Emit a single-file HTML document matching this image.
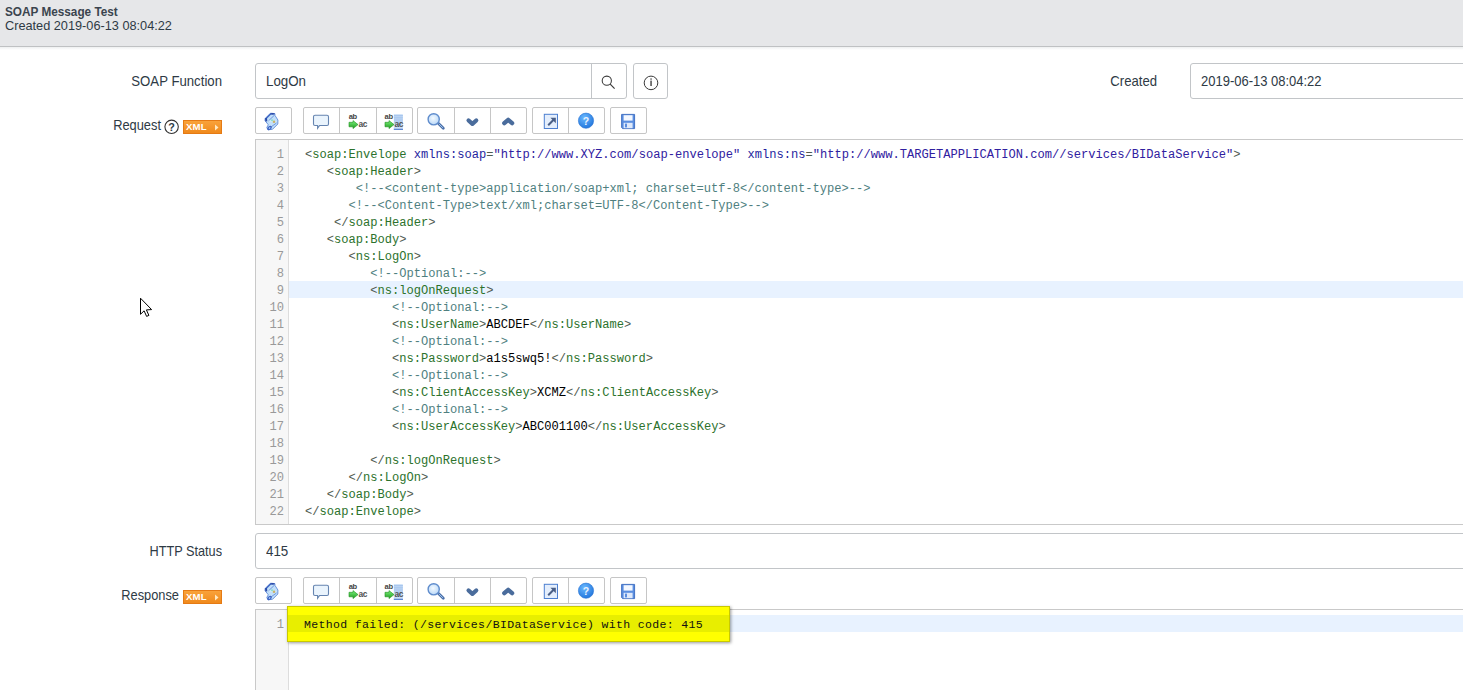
<!DOCTYPE html>
<html><head><meta charset="utf-8"><style>
*{box-sizing:border-box}
html,body{margin:0;padding:0}
body{width:1463px;height:690px;overflow:hidden;position:relative;background:#fff;font-family:"Liberation Sans",sans-serif;color:#2e3a45}
.abs{position:absolute}
.lbl{font-size:14.2px;line-height:16px;white-space:nowrap;text-align:right;transform:scaleX(0.94);transform-origin:100% 0}
.inp{border:1px solid #c2c5c8;border-radius:3px;background:#fff}
.itxt{font-size:14.2px;line-height:16px;white-space:nowrap;transform:scaleX(0.94);transform-origin:0 0}
.grp{border:1px solid #c6c6c6;border-radius:2px;background:#fff}
.sep{width:1px;background:#c6c6c6}
.ed{border:1px solid #c9c9c9;border-right:none;background:#fff;overflow:hidden}
.gut{background:#f7f7f7;border-right:1px solid #dddddd}
.code{font-family:"Liberation Mono",monospace;font-size:12.5px;line-height:17px;white-space:pre;transform:scaleX(0.9667);transform-origin:0 0}
.ln{text-align:right;color:#999;font-family:"Liberation Mono",monospace;font-size:12.5px;transform:scaleX(0.9667);transform-origin:100% 0;line-height:17px;white-space:pre}
.tg{color:#2c722c}.br{color:#4f5a4f}.at{color:#1f1fa0}.st{color:#3020a0}.cm{color:#4f7f7f}.tx{color:#000}
.xml{width:39px;height:14px;background:linear-gradient(#f9a23a,#f08a1c);border:1px solid #e57a14}
.xml span{position:absolute;left:2px;top:0px;font-size:9.6px;font-weight:bold;color:#fff;line-height:12px;letter-spacing:0.2px}
</style></head><body>
<div class="abs" style="left:0;top:0;width:1463px;height:47px;background:#e6e7e9;border-bottom:1px solid #bfc1c3"></div>
<div class="abs" style="left:0;top:47px;width:1463px;height:3px;background:linear-gradient(#eef0f1,#fff)"></div>
<div class="abs" style="left:5px;top:4px;font-size:12.8px;font-weight:bold;line-height:15px;white-space:nowrap;transform:scaleX(0.92);transform-origin:0 0;color:#3a444e">SOAP Message Test</div>
<div class="abs" style="left:5px;top:18px;font-size:13.4px;line-height:16px;white-space:nowrap;transform:scaleX(0.95);transform-origin:0 0">Created 2019-06-13 08:04:22</div>
<div class="abs lbl" style="left:22px;width:200px;top:73px;transform:scaleX(0.93)">SOAP Function</div>
<div class="abs inp" style="left:255px;top:63px;width:372px;height:36px"></div>
<div class="abs" style="left:591px;top:64px;width:1px;height:34px;background:#c2c5c8"></div>
<div class="abs itxt" style="left:266px;top:73px">LogOn</div>
<div class="abs inp" style="left:633px;top:63px;width:35px;height:36px"></div>
<svg class="abs" style="left:596px;top:70px" width="24" height="24" viewBox="0 0 24 24"><circle cx="10.8" cy="10.7" r="4.6" fill="none" stroke="#3a3a3a" stroke-width="1.05"/><line x1="14.2" y1="14.2" x2="18.6" y2="18.6" stroke="#3a3a3a" stroke-width="1.2"/></svg>
<svg class="abs" style="left:639px;top:71px" width="24" height="24" viewBox="0 0 24 24"><circle cx="12" cy="11.9" r="6.8" fill="none" stroke="#3a3a3a" stroke-width="1"/><rect x="11.4" y="9.6" width="1.3" height="5.4" fill="#333"/><rect x="11.4" y="7.4" width="1.3" height="1.3" fill="#333"/></svg>
<div class="abs lbl" style="left:957px;width:200px;top:73px;transform:scaleX(0.925)">Created</div>
<div class="abs inp" style="left:1190px;top:63px;width:300px;height:36px"></div>
<div class="abs itxt" style="left:1201px;top:73px;transform:scaleX(0.915)">2019-06-13 08:04:22</div>
<div class="abs lbl" style="left:-39px;width:200px;top:117px;transform:scaleX(0.905)">Request</div>
<svg class="abs" style="left:160px;top:115px" width="24" height="24" viewBox="0 0 24 24"><circle cx="11.6" cy="11.8" r="6.7" fill="none" stroke="#333" stroke-width="1.1"/><text x="11.6" y="15.7" text-anchor="middle" font-family="Liberation Sans" font-weight="bold" font-size="10.8" fill="#2e3a45">?</text></svg>
<div class="abs xml" style="left:183px;top:120px"><span>XML</span><svg class="abs" style="left:30px;top:3px" width="6" height="8"><path d="M1,0.5 L4.5,3.5 L1,6.5Z" fill="#ffe8c0"/></svg></div>
<div class="abs grp" style="left:255px;top:107px;width:37px;height:27px"></div>
<div class="abs grp" style="left:303px;top:107px;width:110px;height:27px"></div>
<div class="abs sep" style="left:339px;top:108px;height:25px"></div>
<div class="abs sep" style="left:376px;top:108px;height:25px"></div>
<div class="abs grp" style="left:417px;top:107px;width:110px;height:27px"></div>
<div class="abs sep" style="left:454px;top:108px;height:25px"></div>
<div class="abs sep" style="left:490px;top:108px;height:25px"></div>
<div class="abs grp" style="left:532px;top:107px;width:73px;height:27px"></div>
<div class="abs sep" style="left:568px;top:108px;height:25px"></div>
<div class="abs grp" style="left:610px;top:107px;width:37px;height:27px"></div>
<svg class="abs" style="left:250px;top:105px" width="400" height="32" viewBox="250 105 400 32">
<defs>
<linearGradient id="gr107" x1="0" y1="0" x2="0" y2="1"><stop offset="0" stop-color="#7cf27c"/><stop offset="1" stop-color="#1f9a1f"/></linearGradient>
<radialGradient id="hb107" cx="0.4" cy="0.3" r="0.8"><stop offset="0" stop-color="#6ab8ff"/><stop offset="1" stop-color="#1a6fd8"/></radialGradient>
<radialGradient id="mg107" cx="0.45" cy="0.4" r="0.6"><stop offset="0" stop-color="#f4faff"/><stop offset="1" stop-color="#b9d8f8"/></radialGradient>
</defs>
<!-- format scroll -->
<g>
<path d="M270.5,113.2 L274.8,113.6 L275,115.5 L277.9,120 L277.8,124 L272.5,129.3 L268,129.8 L266.8,127.5 L268.3,124.8 L265,120.5 L265.2,118.5 Z" fill="#c2e0fa" stroke="#6a94dc" stroke-width="1"/>
<path d="M270.8,113.8 L265.6,119" stroke="#3f66c4" stroke-width="1.4"/>
<path d="M274.6,115 L268.4,121" stroke="#6f95dc" stroke-width="1"/>
<path d="M266,118.2 L266.3,121.4" stroke="#2a4aa8" stroke-width="2"/>
<ellipse cx="272.5" cy="113.8" rx="2.3" ry="0.9" fill="#2a4aa8"/>
<path d="M268.4,121 L276.5,121.5" stroke="#e8f4ff" stroke-width="1.2" opacity="0.6"/>
<circle cx="274" cy="121.8" r="1.3" fill="#c8b068"/>
<circle cx="272" cy="120.2" r="1" fill="#86e2c4"/>
<path d="M276.5,123 L271,127" stroke="#6f95dc" stroke-width="1"/>
<ellipse cx="269.5" cy="128" rx="2.6" ry="1.7" transform="rotate(-35 269.5 128)" fill="#3a62c4"/>
<ellipse cx="269.6" cy="128" rx="1" ry="0.7" transform="rotate(-35 269.6 128)" fill="#cde6ff"/>
</g>
<!-- comment bubble -->
<path d="M315,115.3 H327 Q328.5,115.3 328.5,116.8 V124 Q328.5,125.5 327,125.5 H319.6 L317.6,128.3 L317.6,125.5 H315 Q313.5,125.5 313.5,124 V116.8 Q313.5,115.3 315,115.3 Z" fill="#eaf4fd" stroke="#6584b0" stroke-width="1.1"/>
<!-- replace -->
<g font-family="Liberation Sans" font-weight="bold">
<text x="348.7" y="119.3" font-size="7.6" fill="#444" letter-spacing="-0.3">ab</text>
<text x="358.4" y="127.4" font-size="8.4" fill="#505050" letter-spacing="-0.4">ac</text>
<path d="M349,122.3 H353 V120.6 L358,124.6 L353,128.6 V126.8 H349 Z" fill="url(#gr107)" stroke="#1f8f1f" stroke-width="0.6"/>
<text x="384.6" y="119.3" font-size="7.6" fill="#444" letter-spacing="-0.3">ab</text>
<rect x="393.8" y="114.2" width="9" height="15.4" fill="#c8def8"/>
<path d="M394,115.8 H403 M394,117.9 H403 M394,120 H403 M394,122.1 H403" stroke="#8fb4e6" stroke-width="0.8"/>
<path d="M393.8,129.3 H403" stroke="#3f6fc8" stroke-width="1"/>
<text x="394.5" y="127.4" font-size="8.4" fill="#505050" letter-spacing="-0.4">ac</text>
<path d="M385,122.3 H389 V120.6 L394,124.6 L389,128.6 V126.8 H385 Z" fill="url(#gr107)" stroke="#1f8f1f" stroke-width="0.6"/>
</g>
<!-- search -->
<line x1="438.5" y1="123.5" x2="443.3" y2="128.3" stroke="#4a6fa8" stroke-width="2.8" stroke-linecap="round"/>
<line x1="439" y1="124" x2="442.6" y2="127.6" stroke="#9cc0ec" stroke-width="1" stroke-linecap="round"/>
<circle cx="433.7" cy="119.3" r="5.6" fill="url(#mg107)" stroke="#5f8ccc" stroke-width="1.4"/>
<!-- down chevron -->
<path d="M468.6,120.5 L472.4,123.8 L476.2,120.5" fill="none" stroke="#4a6c9c" stroke-width="4.3" stroke-linecap="round" stroke-linejoin="round"/>
<!-- up chevron -->
<path d="M504.3,123.2 L508.2,119.8 L512.1,123.2" fill="none" stroke="#4a6c9c" stroke-width="4.3" stroke-linecap="round" stroke-linejoin="round"/>
<!-- expand -->
<rect x="544.3" y="114.3" width="13.2" height="14.2" fill="#e4eefc" stroke="#4d7fd0" stroke-width="1"/>
<path d="M548.2,125.2 L553.6,119.8" stroke="#4a5f86" stroke-width="2"/>
<path d="M550.4,117.8 H555.8 V123.2 Z" fill="#4a5f86"/>
<!-- help -->
<circle cx="586" cy="120.7" r="7.6" fill="url(#hb107)" stroke="#2a74d4" stroke-width="0.6"/>
<text x="586" y="124.6" text-anchor="middle" font-family="Liberation Sans" font-weight="bold" font-size="10.5" fill="#e8f2ff">?</text>
<!-- save -->
<path d="M621.6,114.4 H634.6 V128.6 H622.6 L621.6,127.6 Z" fill="#5a8ee0" stroke="#3a6ac0" stroke-width="0.9"/>
<rect x="623.6" y="115.2" width="9" height="5.4" fill="#f4f8ff"/>
<rect x="623.6" y="122.8" width="9" height="5.4" fill="#dfe9fa"/>
<rect x="625" y="123.6" width="2" height="3.8" fill="#5a8ee0"/>
</svg>
<div class="abs ed" style="left:255px;top:139px;width:1220px;height:386px"></div>
<div class="abs gut" style="left:256px;top:140px;width:33px;height:384px"></div>
<div class="abs" style="left:289px;top:281px;width:1200px;height:17px;background:#e8f2ff"></div>
<div class="abs ln" style="left:256px;width:28px;top:147px">1</div>
<div class="abs ln" style="left:256px;width:28px;top:164px">2</div>
<div class="abs ln" style="left:256px;width:28px;top:181px">3</div>
<div class="abs ln" style="left:256px;width:28px;top:198px">4</div>
<div class="abs ln" style="left:256px;width:28px;top:215px">5</div>
<div class="abs ln" style="left:256px;width:28px;top:232px">6</div>
<div class="abs ln" style="left:256px;width:28px;top:249px">7</div>
<div class="abs ln" style="left:256px;width:28px;top:266px">8</div>
<div class="abs ln" style="left:256px;width:28px;top:283px">9</div>
<div class="abs ln" style="left:256px;width:28px;top:300px">10</div>
<div class="abs ln" style="left:256px;width:28px;top:317px">11</div>
<div class="abs ln" style="left:256px;width:28px;top:334px">12</div>
<div class="abs ln" style="left:256px;width:28px;top:351px">13</div>
<div class="abs ln" style="left:256px;width:28px;top:368px">14</div>
<div class="abs ln" style="left:256px;width:28px;top:385px">15</div>
<div class="abs ln" style="left:256px;width:28px;top:402px">16</div>
<div class="abs ln" style="left:256px;width:28px;top:419px">17</div>
<div class="abs ln" style="left:256px;width:28px;top:436px">18</div>
<div class="abs ln" style="left:256px;width:28px;top:453px">19</div>
<div class="abs ln" style="left:256px;width:28px;top:470px">20</div>
<div class="abs ln" style="left:256px;width:28px;top:487px">21</div>
<div class="abs ln" style="left:256px;width:28px;top:504px">22</div>
<div class="abs code" style="left:305px;top:147px"><span class="br">&lt;</span><span class="tg">soap:Envelope</span><span class="tx"> </span><span class="at">xmlns:soap</span><span class="br">=</span><span class="st">&quot;http://www.XYZ.com/soap-envelope&quot;</span><span class="tx"> </span><span class="at">xmlns:ns</span><span class="br">=</span><span class="st">&quot;http://www.TARGETAPPLICATION.com//services/BIDataService&quot;</span><span class="br">&gt;</span></div>
<div class="abs code" style="left:305px;top:164px"><span class="tx">   </span><span class="br">&lt;</span><span class="tg">soap:Header</span><span class="br">&gt;</span></div>
<div class="abs code" style="left:305px;top:181px"><span class="tx">       </span><span class="cm">&lt;!--&lt;content-type&gt;application/soap+xml; charset=utf-8&lt;/content-type&gt;--&gt;</span></div>
<div class="abs code" style="left:305px;top:198px"><span class="tx">      </span><span class="cm">&lt;!--&lt;Content-Type&gt;text/xml;charset=UTF-8&lt;/Content-Type&gt;--&gt;</span></div>
<div class="abs code" style="left:305px;top:215px"><span class="tx">    </span><span class="br">&lt;/</span><span class="tg">soap:Header</span><span class="br">&gt;</span></div>
<div class="abs code" style="left:305px;top:232px"><span class="tx">   </span><span class="br">&lt;</span><span class="tg">soap:Body</span><span class="br">&gt;</span></div>
<div class="abs code" style="left:305px;top:249px"><span class="tx">      </span><span class="br">&lt;</span><span class="tg">ns:LogOn</span><span class="br">&gt;</span></div>
<div class="abs code" style="left:305px;top:266px"><span class="tx">         </span><span class="cm">&lt;!--Optional:--&gt;</span></div>
<div class="abs code" style="left:305px;top:283px"><span class="tx">         </span><span class="br">&lt;</span><span class="tg">ns:logOnRequest</span><span class="br">&gt;</span></div>
<div class="abs code" style="left:305px;top:300px"><span class="tx">            </span><span class="cm">&lt;!--Optional:--&gt;</span></div>
<div class="abs code" style="left:305px;top:317px"><span class="tx">            </span><span class="br">&lt;</span><span class="tg">ns:UserName</span><span class="br">&gt;</span><span class="tx">ABCDEF</span><span class="br">&lt;/</span><span class="tg">ns:UserName</span><span class="br">&gt;</span></div>
<div class="abs code" style="left:305px;top:334px"><span class="tx">            </span><span class="cm">&lt;!--Optional:--&gt;</span></div>
<div class="abs code" style="left:305px;top:351px"><span class="tx">            </span><span class="br">&lt;</span><span class="tg">ns:Password</span><span class="br">&gt;</span><span class="tx">a1s5swq5!</span><span class="br">&lt;/</span><span class="tg">ns:Password</span><span class="br">&gt;</span></div>
<div class="abs code" style="left:305px;top:368px"><span class="tx">            </span><span class="cm">&lt;!--Optional:--&gt;</span></div>
<div class="abs code" style="left:305px;top:385px"><span class="tx">            </span><span class="br">&lt;</span><span class="tg">ns:ClientAccessKey</span><span class="br">&gt;</span><span class="tx">XCMZ</span><span class="br">&lt;/</span><span class="tg">ns:ClientAccessKey</span><span class="br">&gt;</span></div>
<div class="abs code" style="left:305px;top:402px"><span class="tx">            </span><span class="cm">&lt;!--Optional:--&gt;</span></div>
<div class="abs code" style="left:305px;top:419px"><span class="tx">            </span><span class="br">&lt;</span><span class="tg">ns:UserAccessKey</span><span class="br">&gt;</span><span class="tx">ABC001100</span><span class="br">&lt;/</span><span class="tg">ns:UserAccessKey</span><span class="br">&gt;</span></div>
<div class="abs code" style="left:305px;top:453px"><span class="tx">         </span><span class="br">&lt;/</span><span class="tg">ns:logOnRequest</span><span class="br">&gt;</span></div>
<div class="abs code" style="left:305px;top:470px"><span class="tx">      </span><span class="br">&lt;/</span><span class="tg">ns:LogOn</span><span class="br">&gt;</span></div>
<div class="abs code" style="left:305px;top:487px"><span class="tx">   </span><span class="br">&lt;/</span><span class="tg">soap:Body</span><span class="br">&gt;</span></div>
<div class="abs code" style="left:305px;top:504px"><span class="br">&lt;/</span><span class="tg">soap:Envelope</span><span class="br">&gt;</span></div>
<div class="abs lbl" style="left:22px;width:200px;top:543px;transform:scaleX(0.896)">HTTP Status</div>
<div class="abs inp" style="left:255px;top:533px;width:1300px;height:36px"></div>
<div class="abs itxt" style="left:266px;top:543px">415</div>
<div class="abs lbl" style="left:-21px;width:200px;top:587px;transform:scaleX(0.903)">Response</div>
<div class="abs xml" style="left:183px;top:590px"><span>XML</span><svg class="abs" style="left:30px;top:3px" width="6" height="8"><path d="M1,0.5 L4.5,3.5 L1,6.5Z" fill="#ffe8c0"/></svg></div>
<div class="abs grp" style="left:255px;top:577px;width:37px;height:27px"></div>
<div class="abs grp" style="left:303px;top:577px;width:110px;height:27px"></div>
<div class="abs sep" style="left:339px;top:578px;height:25px"></div>
<div class="abs sep" style="left:376px;top:578px;height:25px"></div>
<div class="abs grp" style="left:417px;top:577px;width:110px;height:27px"></div>
<div class="abs sep" style="left:454px;top:578px;height:25px"></div>
<div class="abs sep" style="left:490px;top:578px;height:25px"></div>
<div class="abs grp" style="left:532px;top:577px;width:73px;height:27px"></div>
<div class="abs sep" style="left:568px;top:578px;height:25px"></div>
<div class="abs grp" style="left:610px;top:577px;width:37px;height:27px"></div>
<svg class="abs" style="left:250px;top:575px" width="400" height="32" viewBox="250 105 400 32">
<defs>
<linearGradient id="gr577" x1="0" y1="0" x2="0" y2="1"><stop offset="0" stop-color="#7cf27c"/><stop offset="1" stop-color="#1f9a1f"/></linearGradient>
<radialGradient id="hb577" cx="0.4" cy="0.3" r="0.8"><stop offset="0" stop-color="#6ab8ff"/><stop offset="1" stop-color="#1a6fd8"/></radialGradient>
<radialGradient id="mg577" cx="0.45" cy="0.4" r="0.6"><stop offset="0" stop-color="#f4faff"/><stop offset="1" stop-color="#b9d8f8"/></radialGradient>
</defs>
<!-- format scroll -->
<g>
<path d="M270.5,113.2 L274.8,113.6 L275,115.5 L277.9,120 L277.8,124 L272.5,129.3 L268,129.8 L266.8,127.5 L268.3,124.8 L265,120.5 L265.2,118.5 Z" fill="#c2e0fa" stroke="#6a94dc" stroke-width="1"/>
<path d="M270.8,113.8 L265.6,119" stroke="#3f66c4" stroke-width="1.4"/>
<path d="M274.6,115 L268.4,121" stroke="#6f95dc" stroke-width="1"/>
<path d="M266,118.2 L266.3,121.4" stroke="#2a4aa8" stroke-width="2"/>
<ellipse cx="272.5" cy="113.8" rx="2.3" ry="0.9" fill="#2a4aa8"/>
<path d="M268.4,121 L276.5,121.5" stroke="#e8f4ff" stroke-width="1.2" opacity="0.6"/>
<circle cx="274" cy="121.8" r="1.3" fill="#c8b068"/>
<circle cx="272" cy="120.2" r="1" fill="#86e2c4"/>
<path d="M276.5,123 L271,127" stroke="#6f95dc" stroke-width="1"/>
<ellipse cx="269.5" cy="128" rx="2.6" ry="1.7" transform="rotate(-35 269.5 128)" fill="#3a62c4"/>
<ellipse cx="269.6" cy="128" rx="1" ry="0.7" transform="rotate(-35 269.6 128)" fill="#cde6ff"/>
</g>
<!-- comment bubble -->
<path d="M315,115.3 H327 Q328.5,115.3 328.5,116.8 V124 Q328.5,125.5 327,125.5 H319.6 L317.6,128.3 L317.6,125.5 H315 Q313.5,125.5 313.5,124 V116.8 Q313.5,115.3 315,115.3 Z" fill="#eaf4fd" stroke="#6584b0" stroke-width="1.1"/>
<!-- replace -->
<g font-family="Liberation Sans" font-weight="bold">
<text x="348.7" y="119.3" font-size="7.6" fill="#444" letter-spacing="-0.3">ab</text>
<text x="358.4" y="127.4" font-size="8.4" fill="#505050" letter-spacing="-0.4">ac</text>
<path d="M349,122.3 H353 V120.6 L358,124.6 L353,128.6 V126.8 H349 Z" fill="url(#gr577)" stroke="#1f8f1f" stroke-width="0.6"/>
<text x="384.6" y="119.3" font-size="7.6" fill="#444" letter-spacing="-0.3">ab</text>
<rect x="393.8" y="114.2" width="9" height="15.4" fill="#c8def8"/>
<path d="M394,115.8 H403 M394,117.9 H403 M394,120 H403 M394,122.1 H403" stroke="#8fb4e6" stroke-width="0.8"/>
<path d="M393.8,129.3 H403" stroke="#3f6fc8" stroke-width="1"/>
<text x="394.5" y="127.4" font-size="8.4" fill="#505050" letter-spacing="-0.4">ac</text>
<path d="M385,122.3 H389 V120.6 L394,124.6 L389,128.6 V126.8 H385 Z" fill="url(#gr577)" stroke="#1f8f1f" stroke-width="0.6"/>
</g>
<!-- search -->
<line x1="438.5" y1="123.5" x2="443.3" y2="128.3" stroke="#4a6fa8" stroke-width="2.8" stroke-linecap="round"/>
<line x1="439" y1="124" x2="442.6" y2="127.6" stroke="#9cc0ec" stroke-width="1" stroke-linecap="round"/>
<circle cx="433.7" cy="119.3" r="5.6" fill="url(#mg577)" stroke="#5f8ccc" stroke-width="1.4"/>
<!-- down chevron -->
<path d="M468.6,120.5 L472.4,123.8 L476.2,120.5" fill="none" stroke="#4a6c9c" stroke-width="4.3" stroke-linecap="round" stroke-linejoin="round"/>
<!-- up chevron -->
<path d="M504.3,123.2 L508.2,119.8 L512.1,123.2" fill="none" stroke="#4a6c9c" stroke-width="4.3" stroke-linecap="round" stroke-linejoin="round"/>
<!-- expand -->
<rect x="544.3" y="114.3" width="13.2" height="14.2" fill="#e4eefc" stroke="#4d7fd0" stroke-width="1"/>
<path d="M548.2,125.2 L553.6,119.8" stroke="#4a5f86" stroke-width="2"/>
<path d="M550.4,117.8 H555.8 V123.2 Z" fill="#4a5f86"/>
<!-- help -->
<circle cx="586" cy="120.7" r="7.6" fill="url(#hb577)" stroke="#2a74d4" stroke-width="0.6"/>
<text x="586" y="124.6" text-anchor="middle" font-family="Liberation Sans" font-weight="bold" font-size="10.5" fill="#e8f2ff">?</text>
<!-- save -->
<path d="M621.6,114.4 H634.6 V128.6 H622.6 L621.6,127.6 Z" fill="#5a8ee0" stroke="#3a6ac0" stroke-width="0.9"/>
<rect x="623.6" y="115.2" width="9" height="5.4" fill="#f4f8ff"/>
<rect x="623.6" y="122.8" width="9" height="5.4" fill="#dfe9fa"/>
<rect x="625" y="123.6" width="2" height="3.8" fill="#5a8ee0"/>
</svg>
<div class="abs ed" style="left:255px;top:609px;width:1220px;height:200px"></div>
<div class="abs gut" style="left:256px;top:610px;width:33px;height:198px"></div>
<div class="abs" style="left:289px;top:615px;width:1200px;height:17px;background:#e8f2ff"></div>
<div class="abs ln" style="left:256px;width:28px;top:617px">1</div>
<div class="abs" style="left:287px;top:606px;width:443px;height:36px;background:#ffff00;border:1px solid #c9c900;box-shadow:1px 1px 3px rgba(0,0,0,0.4)"></div>
<div class="abs" style="left:288px;top:615px;width:441px;height:17px;background:#e8ee00"></div>
<div class="abs code" style="left:304px;top:616px;color:#111;font-size:11.5px;letter-spacing:0.354px;transform:none">Method failed: (/services/BIDataService) with code: 415</div>
<svg class="abs" style="left:138px;top:296px" width="18" height="24" viewBox="0 0 18 24"><path d="M2.5,2.2 V18.3 L6.1,14.8 L8.6,20.4 L10.9,19.4 L8.4,13.9 L13.6,13.6 Z" fill="#fff" stroke="#000" stroke-width="1" stroke-linejoin="miter"/></svg>
</body></html>
